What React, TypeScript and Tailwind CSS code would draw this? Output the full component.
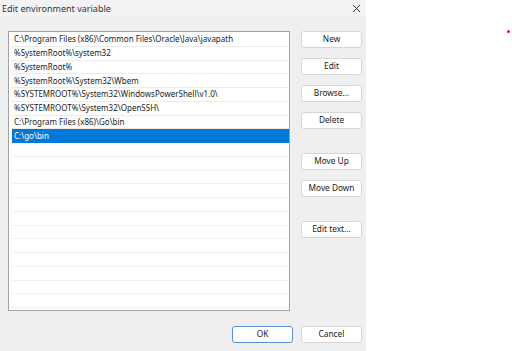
import React from "react";

const paths = [
  "C:\\Program Files (x86)\\Common Files\\Oracle\\Java\\javapath",
  "%SystemRoot%\\system32",
  "%SystemRoot%",
  "%SystemRoot%\\System32\\Wbem",
  "%SYSTEMROOT%\\System32\\WindowsPowerShell\\v1.0\\",
  "%SYSTEMROOT%\\System32\\OpenSSH\\",
  "C:\\Program Files (x86)\\Go\\bin",
  "C:\\go\\bin",
];

const selectedIndex = 7;
const emptyRows = 12;

function DlgButton({ label, primary }: { label: string; primary?: boolean }) {
  return (
    <button
      type="button"
      className={
        "flex h-[17px] w-[61px] items-center justify-center rounded-[3px] border bg-white text-[8.3px] leading-none text-[#1b1b1b] " +
        (primary ? "border-[#5a8fd0]" : "border-[#d6d6d6]")
      }
    >
      {label}
    </button>
  );
}

export default function App() {
  return (
    <div
      className="flex h-[351px] w-[512px] bg-white"
      style={{ fontFamily: '"Noto Sans", "Segoe UI", sans-serif' }}
    >
      <div className="flex h-full w-[366px] flex-col bg-[#efefef]">
        <div className="flex h-[17px] items-center justify-between bg-[#f3f3f5] pl-[2px] pr-[5px]">
          <span className="text-[9px] leading-none text-[#333]">
            Edit environment variable
          </span>
          <svg width="9" height="9" viewBox="0 0 9 9" className="text-[#333]">
            <path d="M1 1 L8 8 M8 1 L1 8" stroke="currentColor" strokeWidth="1" />
          </svg>
        </div>

        <div className="flex gap-[11px] pl-[8px] pt-[14px]">
          <div className="h-[280px] w-[282px] overflow-hidden border border-[#a3a3a3] bg-white pl-[1px] pt-px">
            {paths.map((p, i) => (
              <div
                key={p}
                className={
                  "flex h-[13.75px] items-center border-b text-[8px] leading-none " +
                  (i === selectedIndex
                    ? "ml-[2px] border-[#0078d7] bg-[#0078d7] pl-[2px] text-white"
                    : "ml-px border-[#ececec] pl-[3px] text-[#1b1b1b]")
                }
              >
                {p}
              </div>
            ))}
            {Array.from({ length: emptyRows }).map((_, i) => (
              <div key={i} className="ml-px h-[13.75px] border-b border-[#f0f0f0]" />
            ))}
          </div>

          <div className="flex flex-col">
            <div className="flex flex-col gap-[10px]">
              <DlgButton label="New" />
              <DlgButton label="Edit" />
              <DlgButton label="Browse..." />
              <DlgButton label="Delete" />
            </div>
            <div className="mt-[24px] flex flex-col gap-[10px]">
              <DlgButton label="Move Up" />
              <DlgButton label="Move Down" />
            </div>
            <div className="mt-[24px]">
              <DlgButton label="Edit text..." />
            </div>
          </div>
        </div>

        <div className="flex justify-end gap-[8px] pr-[4px] pt-[15px]">
          <DlgButton label="OK" primary />
          <DlgButton label="Cancel" />
        </div>
      </div>

      <div className="relative flex-1">
        <div className="absolute left-[141px] top-[30px] h-[3px] w-[3px] rounded-full bg-[#e81123]" />
      </div>
    </div>
  );
}
